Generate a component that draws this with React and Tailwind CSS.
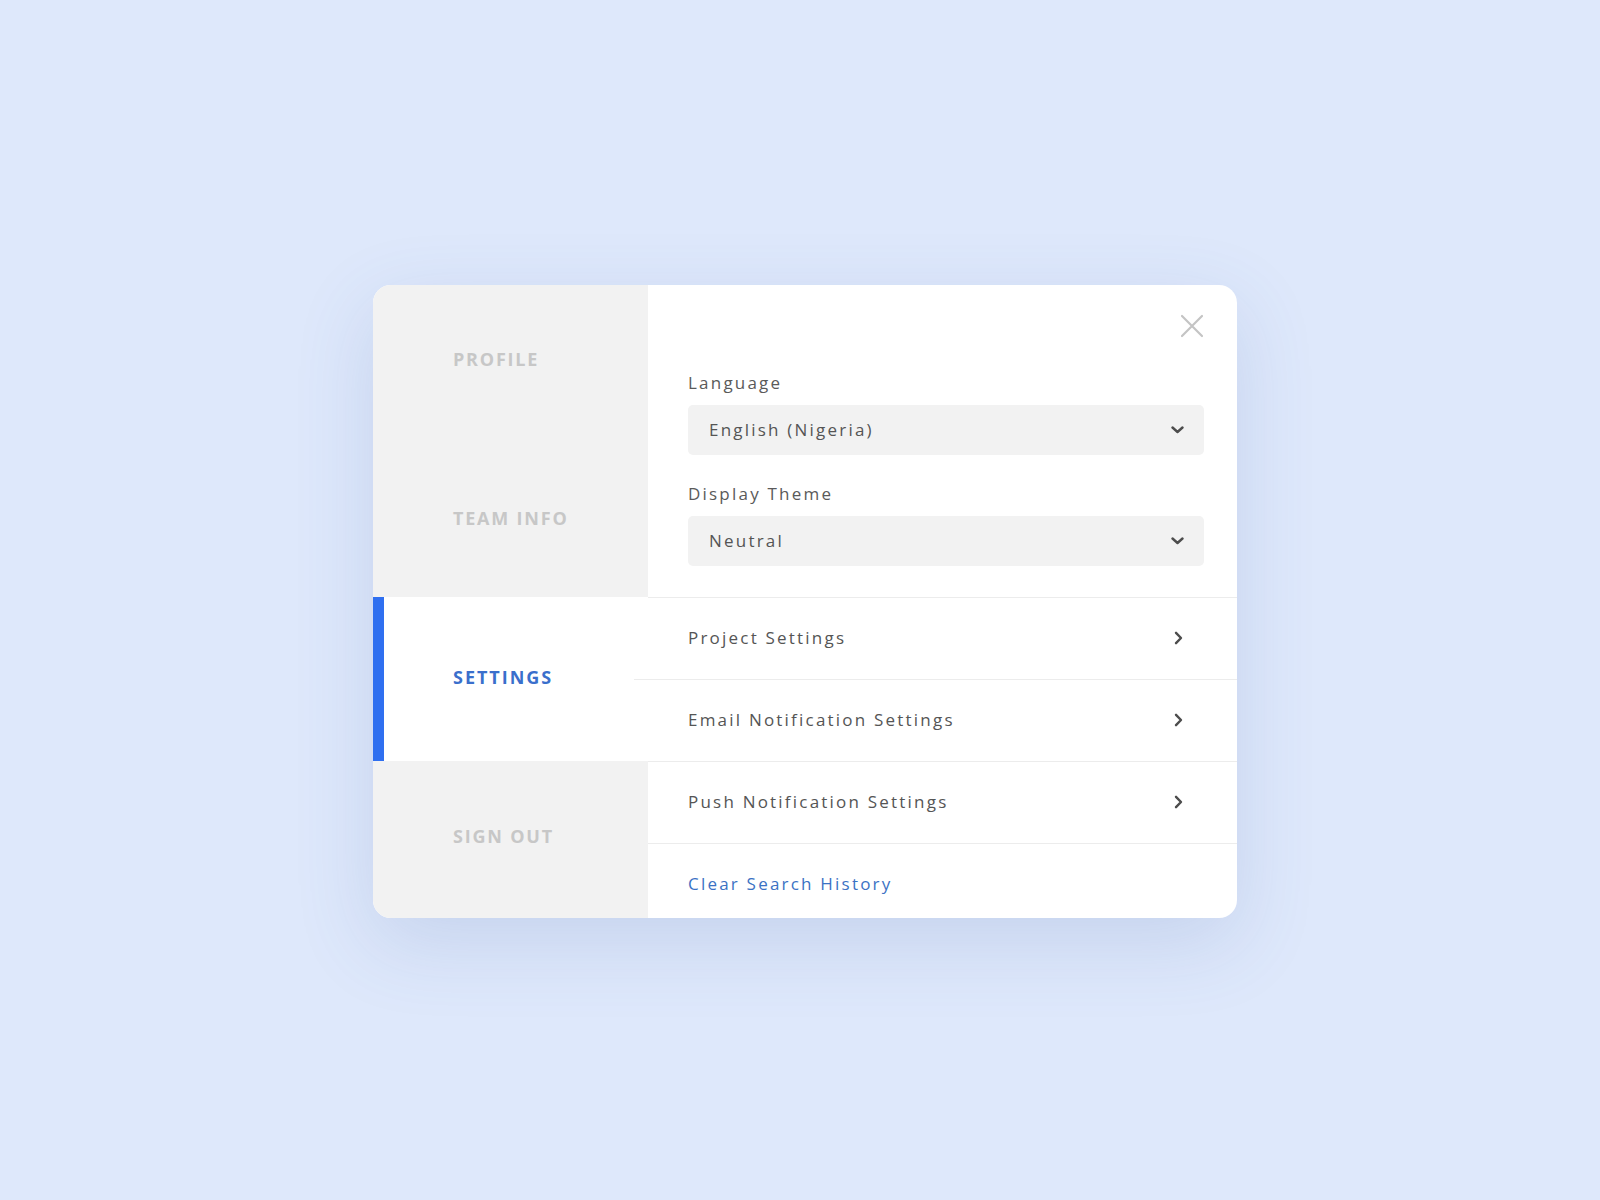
const navItems = [
    { label: 'Profile', height: 'h-[156px] pb-[6px]' },
    { label: 'Team Info', height: 'h-[156px]' },
    { label: 'Settings', height: 'h-[164px] pb-[3px]', active: true },
    { label: 'Sign Out', height: 'flex-1 pb-[5px]' },
]

const linkRows = [
    { label: 'Project Settings', extendLine: false },
    { label: 'Email Notification Settings', extendLine: true },
    { label: 'Push Notification Settings', extendLine: false },
]

const CloseIcon = () => (
    <svg width="24" height="24" viewBox="0 0 24 24" fill="none">
        <path
            d="M2 2L22 22M22 2L2 22"
            stroke="#c4c4c4"
            strokeWidth="2.2"
            strokeLinecap="round"
        />
    </svg>
)

const ChevronDown = () => (
    <svg width="13" height="8" viewBox="0 0 13 8" fill="none">
        <polyline
            points="1.5,1.5 6.5,6 11.5,1.5"
            stroke="#4d4d4d"
            strokeWidth="2.4"
            strokeLinecap="round"
            strokeLinejoin="round"
        />
    </svg>
)

const ChevronRight = () => (
    <svg width="9" height="14" viewBox="0 0 9 14" fill="none">
        <polyline
            points="2,1.8 7,7 2,12.2"
            stroke="#4d4d4d"
            strokeWidth="2.4"
            strokeLinecap="round"
            strokeLinejoin="round"
        />
    </svg>
)

const SelectField = ({ label, value, className = '' }) => (
    <div className={className}>
        <p className="h-[24px] leading-[24px] text-[17px] tracking-[0.13em] text-[#5a5a5a]">
            {label}
        </p>
        <div className="mt-[10px] h-[50px] bg-[#f2f2f2] rounded-[5px] flex items-center justify-between pl-[21px] pr-[20px]">
            <span className="text-[17px] tracking-[0.13em] text-[#555555]">
                {value}
            </span>
            <ChevronDown />
        </div>
    </div>
)

const App = () => {
    return (
        <div
            className="min-h-screen bg-[#dee8fb] flex items-center justify-center pl-[10px] pt-[2px]"
            style={{ fontFamily: '"Open Sans", Lato, sans-serif' }}
        >
            <div className="w-[864px] h-[633px] bg-white rounded-[18px] overflow-hidden flex shadow-[0_24px_80px_rgba(70,100,170,0.16)]">
                {/* Sidebar */}
                <div className="w-[275px] flex flex-col bg-[#f2f2f2]">
                    {navItems.map((item) => (
                        <div
                            key={item.label}
                            className={
                                item.active
                                    ? `${item.height} flex items-center bg-white border-l-[11px] border-[#2f6ff0] pl-[69px]`
                                    : `${item.height} flex items-center pl-[80px]`
                            }
                        >
                            <span
                                className={
                                    item.active
                                        ? 'text-[18px] font-bold uppercase tracking-[0.11em] text-[#3a6fcc]'
                                        : 'text-[18px] font-bold uppercase tracking-[0.1em] text-[#c7c7c7]'
                                }
                            >
                                {item.label}
                            </span>
                        </div>
                    ))}
                </div>

                {/* Content */}
                <div className="flex-1 flex flex-col">
                    <div className="h-[312px] pl-[40px] pr-[33px]">
                        <div className="flex justify-end pt-[29px]">
                            <button className="w-[24px] h-[24px] flex items-center justify-center">
                                <CloseIcon />
                            </button>
                        </div>
                        <SelectField
                            label="Language"
                            value="English (Nigeria)"
                            className="mt-[33px]"
                        />
                        <SelectField
                            label="Display Theme"
                            value="Neutral"
                            className="mt-[27px]"
                        />
                    </div>

                    {linkRows.map((row) => (
                        <div key={row.label} className="h-[82px]">
                            {row.extendLine ? (
                                <div className="h-px bg-[#ececec] -ml-[14px]" />
                            ) : (
                                <div className="h-px bg-[#ececec]" />
                            )}
                            <div className="h-[81px] flex items-center justify-between pl-[40px] pr-[54px]">
                                <span className="text-[17px] tracking-[0.13em] text-[#555555]">
                                    {row.label}
                                </span>
                                <ChevronRight />
                            </div>
                        </div>
                    ))}

                    <div className="flex-1 border-t border-[#ececec] flex items-center pl-[40px] pt-[6px]">
                        <span className="text-[17px] tracking-[0.13em] text-[#3b72c4]">
                            Clear Search History
                        </span>
                    </div>
                </div>
            </div>
        </div>
    )
}

export default App
